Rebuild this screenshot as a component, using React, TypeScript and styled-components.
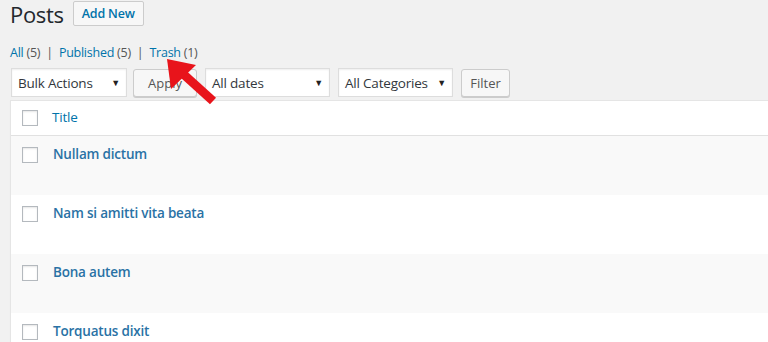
import React from "react";
import styled, { createGlobalStyle } from "styled-components";

const GlobalStyle = createGlobalStyle`
  html, body {
    margin: 0;
    padding: 0;
    background: #f1f1f1;
    font-family: "Open Sans", "Noto Sans", sans-serif;
    color: #23282d;
    overflow: hidden;
  }
`;

const posts = [
  "Nullam dictum",
  "Nam si amitti vita beata",
  "Bona autem",
  "Torquatus dixit",
];

const App = () => {
  return (
    <>
      <GlobalStyle />
      <Wrap>
        <HeadRow>
          <PageTitle>Posts</PageTitle>
          <AddNew>Add New</AddNew>
        </HeadRow>
        <SubSubSub>
          <span>
            <a>All</a> <Count>(5)</Count>
          </span>
          <Sep>|</Sep>
          <span>
            <a>Published</a> <Count>(5)</Count>
          </span>
          <Sep>|</Sep>
          <span>
            <a>Trash</a> <Count>(1)</Count>
          </span>
        </SubSubSub>
        <TableNav>
          <Select $w={116}>
            Bulk Actions <Caret>▼</Caret>
          </Select>
          <Button $w={64} $ml={-2}>Apply</Button>
          <Select $w={125}>
            All dates <Caret>▼</Caret>
          </Select>
          <Select $w={115}>
            All Categories <Caret>▼</Caret>
          </Select>
          <Button $w={49}>Filter</Button>
        </TableNav>
        <Table>
          <HeaderRow>
            <Check />
            <HeaderTitle>Title</HeaderTitle>
          </HeaderRow>
          {posts.map((p, i) => (
            <Row key={p} $alt={i % 2 === 0}>
              <Check />
              <PostTitle>{p}</PostTitle>
            </Row>
          ))}
        </Table>
        <Arrow viewBox="0 0 768 342" width="768" height="342">
          <path d="M213 101 L181 72" stroke="#e8141b" strokeWidth="9" strokeLinecap="butt" />
          <polygon points="167,59 196,65 171,89" fill="#e8141b" />
        </Arrow>
      </Wrap>
    </>
  );
};

const Wrap = styled.div`
  position: relative;
  width: 768px;
  height: 342px;
  overflow: hidden;
  padding-left: 10px;
  box-sizing: border-box;
`;

const HeadRow = styled.div`
  display: flex;
  align-items: center;
  gap: 9px;
  height: 30px;
`;

const PageTitle = styled.h1`
  margin: 0;
  margin-top: -2px;
  font-size: 22px;
  font-weight: 400;
  letter-spacing: -0.3px;
  line-height: 30px;
  color: #23282d;
`;

const AddNew = styled.span`
  display: inline-flex;
  align-items: center;
  height: 25px;
  padding: 0 8px;
  box-sizing: border-box;
  border: 1px solid #ccc;
  border-radius: 2px;
  background: #f7f7f7;
  color: #0073aa;
  font-size: 12.5px;
  font-weight: 600;
  letter-spacing: -0.2px;
  margin-top: -3px;
`;

const SubSubSub = styled.div`
  display: flex;
  align-items: center;
  gap: 6px;
  font-size: 12.5px;
  letter-spacing: -0.25px;
  margin-top: 12px;
  height: 20px;

  a {
    color: #0073aa;
  }
`;

const Count = styled.span`
  color: #555;
`;

const Sep = styled.span`
  color: #555;
`;

const TableNav = styled.div`
  display: flex;
  align-items: center;
  gap: 8px;
  margin-top: 6px;
  height: 29px;
  padding-left: 1px;
`;

const Select = styled.div<{ $w: number }>`
  display: flex;
  align-items: center;
  justify-content: space-between;
  width: ${(p) => p.$w}px;
  height: 29px;
  box-sizing: border-box;
  padding: 0 6px;
  background: #fff;
  border: 1px solid #ddd;
  box-shadow: inset 0 1px 2px rgba(0, 0, 0, 0.07);
  font-size: 13.5px;
  letter-spacing: -0.2px;
  color: #32373c;
`;

const Caret = styled.span`
  font-size: 9px;
  color: #222;
`;

const Button = styled.div<{ $w: number; $ml?: number }>`
  display: flex;
  align-items: center;
  justify-content: center;
  width: ${(p) => p.$w}px;
  height: 28px;
  margin-left: ${(p) => p.$ml ?? 0}px;
  box-sizing: border-box;
  border: 1px solid #ccc;
  border-radius: 3px;
  background: #f7f7f7;
  box-shadow: 0 1px 0 #ccc;
  font-size: 13px;
  color: #555;
`;

const Table = styled.div`
  margin-top: 3px;
  background: #fff;
  border: 1px solid #e5e5e5;
  border-right: none;
  box-shadow: 0 1px 1px rgba(0, 0, 0, 0.04);
`;

const HeaderRow = styled.div`
  display: flex;
  align-items: center;
  height: 35px;
  padding-left: 11px;
  border-bottom: 1px solid #e1e1e1;
  box-sizing: border-box;
`;

const Row = styled.div<{ $alt: boolean }>`
  display: flex;
  align-items: flex-start;
  height: 59px;
  padding: 11px 0 0 11px;
  box-sizing: border-box;
  background: ${(p) => (p.$alt ? "#f9f9f9" : "#fff")};
`;

const Check = styled.span`
  width: 16px;
  height: 16px;
  box-sizing: border-box;
  border: 1px solid #b4b9be;
  background: #fff;
  box-shadow: inset 0 1px 2px rgba(0, 0, 0, 0.1);
  flex-shrink: 0;
`;

const HeaderTitle = styled.span`
  margin-left: 14px;
  margin-top: -2px;
  font-size: 13.5px;
  letter-spacing: -0.2px;
  color: #0073aa;
`;

const PostTitle = styled.span`
  margin-left: 15px;
  font-size: 13.5px;
  font-weight: 600;
  letter-spacing: -0.2px;
  color: #2a72a5;
  line-height: 18px;
  margin-top: -2px;
`;

const Arrow = styled.svg`
  position: absolute;
  left: 0;
  top: 0;
  pointer-events: none;
`;

export default App;
